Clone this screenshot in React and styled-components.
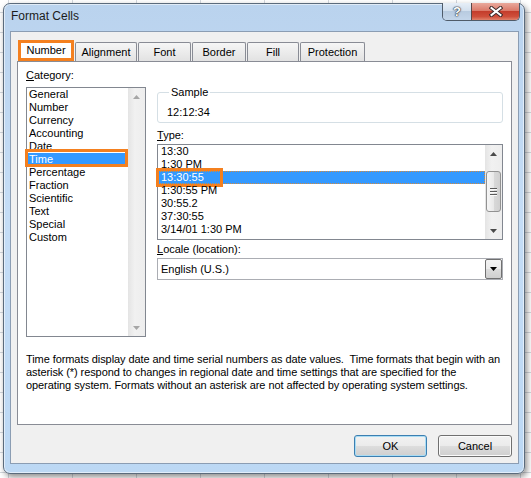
import styled, { createGlobalStyle } from "styled-components";

const GlobalStyle = createGlobalStyle`
  html, body { margin: 0; padding: 0; }
  * { box-sizing: border-box; }
  body {
    width: 531px;
    height: 478px;
    overflow: hidden;
    background-color: #fff;
    background-image:
      linear-gradient(to right, #d4d8de 1px, transparent 1px),
      linear-gradient(to bottom, #d4d8de 1px, transparent 1px);
    background-size: 64px 100%, 100% 20px;
    background-position: 8px 0, 0 12px;
    font-family: "Liberation Sans", Arial, sans-serif;
    font-size: 11px;
    color: #000;
  }
`;

const ORANGE = "#f4801f";

const Frame = styled.div`
  margin: 3px 0 0 3px;
  width: 522px;
  height: 471px;
  border: 1px solid #5b6b7c;
  border-radius: 7px;
  background: linear-gradient(to bottom, #bad3ee 0%, #c5ddf6 45%, #bcd8f4 100%);
  box-shadow: inset 0 0 0 1px rgba(255, 255, 255, 0.55), 2px 3px 6px rgba(0, 0, 0, 0.45);
  display: flex;
  flex-direction: column;
`;

const TitleBar = styled.div`
  height: 27px;
  display: flex;
  justify-content: space-between;
  align-items: flex-start;
`;

const Title = styled.div`
  padding: 5px 0 0 7px;
  font-size: 12px;
  line-height: 15px;
  color: #1b1b1b;
`;

const CaptionButtons = styled.div`
  margin: -1px 4px 0 0;
  height: 18px;
  display: flex;
  border: 1px solid #4f5b69;
  border-top: none;
  border-radius: 0 0 5px 5px;
  overflow: hidden;
`;

const CaptionButton = styled.div`
  width: ${(p) => p.$w}px;
  height: 100%;
  display: flex;
  align-items: center;
  justify-content: center;
  background: ${(p) =>
    p.$close
      ? "linear-gradient(to bottom, #e9a99c 0%, #db7a6a 45%, #c43d2c 50%, #cf4f3b 80%, #e0836c 100%)"
      : "linear-gradient(to bottom, #e6eef7 0%, #d3e0ee 45%, #b8cbe0 50%, #c4d6ea 100%)"};
  border-left: ${(p) => (p.$close ? "1px solid #5a4848" : "none")};
  color: #fff;
  font-weight: bold;
  font-size: 13px;
  text-shadow: 0 0 1px #2c3440, 0 0 1px #2c3440, 0 0 2px #2c3440;
`;

const Client = styled.div`
  margin-left: 6px;
  width: 509px;
  height: 433px;
  background: #f0f0f0;
  border: 1px solid #8b9db3;
  padding: 8px 6px 0 6px;
  display: flex;
  flex-direction: column;
`;

const TabStrip = styled.div`
  height: 21px;
  display: flex;
  align-items: flex-end;
  gap: 1px;
  padding-left: 1px;
`;

const Tab = styled.div`
  width: ${(p) => p.$w}px;
  height: ${(p) => (p.$active ? 21 : 19)}px;
  border: ${(p) => (p.$active ? `3px solid ${ORANGE}` : "1px solid #898c95")};
  border-bottom: ${(p) => (p.$active ? `3px solid ${ORANGE}` : "none")};
  border-radius: ${(p) => (p.$active ? "0" : "2px 2px 0 0")};
  background: ${(p) =>
    p.$active ? "#fff" : "linear-gradient(to bottom, #f6f6f6 0%, #ececec 50%, #e2e2e2 100%)"};
  text-align: center;
  line-height: ${(p) => (p.$active ? 15 : 18)}px;
`;

const Panel = styled.div`
  width: 495px;
  height: 364px;
  border: 1px solid #898c95;
  background: #fff;
  padding: 7px 8px 0 8px;
`;

const ContentGrid = styled.div`
  display: grid;
  grid-template-columns: 120px 346px;
  column-gap: 11px;
`;

const Column = styled.div`
  display: flex;
  flex-direction: column;
  padding-top: ${(p) => p.$top || 0}px;
`;

const FieldLabel = styled.div`
  line-height: 13px;
  margin-top: ${(p) => p.$mt || 0}px;
  margin-bottom: ${(p) => p.$mb || 0}px;
`;

const ListBox = styled.div`
  height: ${(p) => p.$h}px;
  border: 1px solid #828790;
  background: #fff;
  display: flex;
`;

const ListItems = styled.div`
  flex: 1;
`;

const Row = styled.div`
  position: relative;
  height: 13px;
  line-height: 13px;
  padding-left: ${(p) => p.$pad}px;
  white-space: nowrap;
  background: ${(p) => (p.$selected ? "#3399ff" : "transparent")};
  color: ${(p) => (p.$selected ? "#fff" : "#000")};
  outline: ${(p) => (p.$focus ? "1px dotted #d58a3c" : "none")};
  outline-offset: -1px;
`;

const Mark = styled.span`
  position: absolute;
  left: -2px;
  top: ${(p) => p.$top}px;
  width: ${(p) => p.$w}px;
  height: ${(p) => p.$h}px;
  border: 3px solid ${ORANGE};
  pointer-events: none;
`;

const ScrollBar = styled.div`
  width: 17px;
  display: flex;
  flex-direction: column;
  background: linear-gradient(to right, #e4e4e4 0%, #f1f1f1 40%, #ededed 100%);
`;

const ArrowButton = styled.div`
  height: 17px;
  display: flex;
  align-items: center;
  justify-content: center;
`;

const Track = styled.div`
  flex: 1;
  padding: 9px 0 0 1px;
`;

const Thumb = styled.div`
  width: 15px;
  height: 41px;
  border: 1px solid #929292;
  border-radius: 3px;
  background: linear-gradient(to right, #f6f6f6 0%, #e9e9e9 50%, #d9d9d9 51%, #d0d0d0 100%);
  display: flex;
  flex-direction: column;
  align-items: center;
  justify-content: center;
  gap: 1px;
`;

const Grip = styled.div`
  width: 7px;
  height: 1px;
  background: #5a5a5a;
  box-shadow: 0 1px 0 #fafafa;
  margin-bottom: 1px;
`;

const Fieldset = styled.fieldset`
  margin: 0;
  border: 1px solid #d5dfe5;
  border-radius: 3px;
  padding: 7px 9px 3px 9px;
  line-height: 13px;
`;

const Legend = styled.legend`
  padding: 0 2px;
  margin-left: 2px;
  line-height: 13px;
`;

const Combo = styled.div`
  margin-top: 2px;
  height: 22px;
  border: 1px solid #abadb3;
  background: #fff;
  display: flex;
  align-items: center;
`;

const ComboText = styled.div`
  flex: 1;
  padding-left: 3px;
  line-height: 20px;
`;

const DropButton = styled.div`
  width: 17px;
  height: 20px;
  border: 1px solid #707070;
  border-radius: 2px;
  background: linear-gradient(to bottom, #f2f2f2 0%, #ebebeb 50%, #dddddd 51%, #cfcfcf 100%);
  display: flex;
  align-items: center;
  justify-content: center;
`;

const Description = styled.div`
  margin-top: 16px;
  line-height: 13px;
  letter-spacing: -0.08px;
  white-space: pre;
`;

const ButtonRow = styled.div`
  margin-top: 10px;
  display: flex;
  justify-content: flex-end;
  gap: 11px;
`;

const DialogButton = styled.div`
  width: ${(p) => p.$w}px;
  height: 22px;
  border: 1px solid ${(p) => (p.$default ? "#3c7fb1" : "#707070")};
  border-radius: 3px;
  background: linear-gradient(to bottom, #f2f2f2 0%, #ebebeb 50%, #dddddd 51%, #cfcfcf 100%);
  box-shadow: ${(p) => (p.$default ? "inset 0 0 0 1px #a9dcf4" : "inset 0 0 0 1px #fbfbfb")};
  text-align: center;
  line-height: 20px;
`;

const Arrow = ({ down, color = "#4a4a4a" }) => (
  <svg width="7" height="4" viewBox="0 0 7 4">
    <polygon points={down ? "0,0 7,0 3.5,4" : "0,4 7,4 3.5,0"} fill={color} />
  </svg>
);

const CloseGlyph = () => (
  <svg width="14" height="11" viewBox="0 0 14 11">
    <path d="M2.5 2 L11.5 9 M11.5 2 L2.5 9" stroke="#3a2a2a" strokeWidth="4" strokeLinecap="square" />
    <path d="M2.5 2 L11.5 9 M11.5 2 L2.5 9" stroke="#fff" strokeWidth="2" strokeLinecap="square" />
  </svg>
);

const tabs = [
  { name: "Number", w: 56, active: true },
  { name: "Alignment", w: 62 },
  { name: "Font", w: 53 },
  { name: "Border", w: 54 },
  { name: "Fill", w: 52 },
  { name: "Protection", w: 65 },
];

const categories = [
  "General",
  "Number",
  "Currency",
  "Accounting",
  "Date",
  "Time",
  "Percentage",
  "Fraction",
  "Scientific",
  "Text",
  "Special",
  "Custom",
];

const types = [
  "13:30",
  "1:30 PM",
  "13:30:55",
  "1:30:55 PM",
  "30:55.2",
  "37:30:55",
  "3/14/01 1:30 PM",
];

const description = [
  "Time formats display date and time serial numbers as date values.  Time formats that begin with an",
  "asterisk (*) respond to changes in regional date and time settings that are specified for the",
  "operating system. Formats without an asterisk are not affected by operating system settings.",
];

export default function App() {
  return (
    <>
      <GlobalStyle />
      <Frame>
        <TitleBar>
          <Title>Format Cells</Title>
          <CaptionButtons>
            <CaptionButton $w={28}>?</CaptionButton>
            <CaptionButton $w={48} $close>
              <CloseGlyph />
            </CaptionButton>
          </CaptionButtons>
        </TitleBar>

        <Client>
          <TabStrip>
            {tabs.map((t) => (
              <Tab key={t.name} $w={t.w} $active={t.active}>
                {t.name}
              </Tab>
            ))}
          </TabStrip>

          <Panel>
            <ContentGrid>
              <Column>
                <FieldLabel $mb={5}>
                  <u>C</u>ategory:
                </FieldLabel>
                <ListBox $h={250}>
                  <ListItems>
                    {categories.map((c) => (
                      <Row key={c} $pad={2} $selected={c === "Time"}>
                        {c}
                        {c === "Time" && <Mark $top={-4} $w={103} $h={18} />}
                      </Row>
                    ))}
                  </ListItems>
                  <ScrollBar>
                    <ArrowButton>
                      <Arrow color="#a6a6a6" />
                    </ArrowButton>
                    <Track />
                    <ArrowButton>
                      <Arrow down color="#a6a6a6" />
                    </ArrowButton>
                  </ScrollBar>
                </ListBox>
              </Column>

              <Column $top={17}>
                <Fieldset>
                  <Legend>Sample</Legend>
                  12:12:34
                </Fieldset>

                <FieldLabel $mt={6} $mb={2}>
                  <u>T</u>ype:
                </FieldLabel>
                <ListBox $h={96}>
                  <ListItems>
                    {types.map((t) => (
                      <Row key={t} $pad={3} $selected={t === "13:30:55"} $focus={t === "13:30:55"}>
                        {t}
                        {t === "13:30:55" && <Mark $top={-3} $w={67} $h={19} />}
                      </Row>
                    ))}
                  </ListItems>
                  <ScrollBar>
                    <ArrowButton>
                      <Arrow />
                    </ArrowButton>
                    <Track>
                      <Thumb>
                        <Grip />
                        <Grip />
                        <Grip />
                      </Thumb>
                    </Track>
                    <ArrowButton>
                      <Arrow down />
                    </ArrowButton>
                  </ScrollBar>
                </ListBox>

                <FieldLabel $mt={3}>
                  <u>L</u>ocale (location):
                </FieldLabel>
                <Combo>
                  <ComboText>English (U.S.)</ComboText>
                  <DropButton>
                    <Arrow down color="#000" />
                  </DropButton>
                </Combo>
              </Column>
            </ContentGrid>

            <Description>{description.join("\n")}</Description>
          </Panel>

          <ButtonRow>
            <DialogButton $w={73} $default>
              OK
            </DialogButton>
            <DialogButton $w={74}>Cancel</DialogButton>
          </ButtonRow>
        </Client>
      </Frame>
    </>
  );
}
